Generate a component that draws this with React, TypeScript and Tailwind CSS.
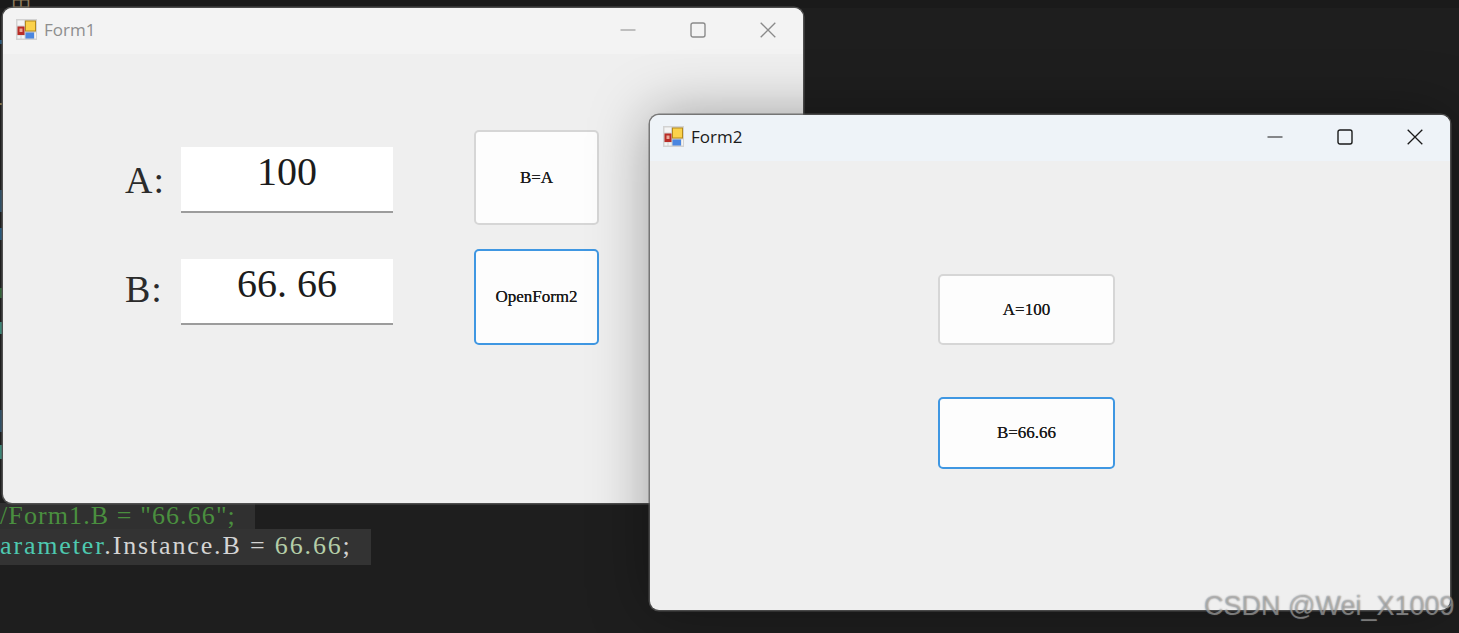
const windowIcon = (
  <svg width="21" height="21" viewBox="0 0 21 21" className="shrink-0">
    <rect x="0" y="0" width="21" height="21" fill="#d2d2d2" />
    <rect x="1.5" y="1.5" width="6.5" height="5" fill="#f4f4f4" />
    <rect x="1.5" y="16.5" width="3" height="3" fill="#f4f4f4" />
    <rect x="5.5" y="16.5" width="3" height="3" fill="#f4f4f4" />
    <rect x="1.5" y="7.5" width="7" height="8.5" fill="#b92c26" />
    <rect x="3.5" y="9.5" width="3" height="3.5" fill="#eca99a" />
    <rect x="9" y="1.5" width="11" height="11" fill="#b58a1c" />
    <rect x="10" y="2.5" width="9" height="9" fill="#fbd24b" />
    <rect x="9.5" y="13.5" width="8.5" height="6" fill="#4a86e0" />
    <rect x="18.5" y="13.5" width="1.5" height="6" fill="#f4f4f4" />
  </svg>
);

function TitleBar({ title, active }: { title: string; active: boolean }) {
  const stroke = active ? '#1a1a1a' : '#8a8a8a';
  return (
    <div className={`box-border flex h-[46px] items-center pb-[3px] ${active ? 'bg-[#eef3f8]' : 'bg-[#f3f3f3]'}`}>
      <div className="ml-[13px]">{windowIcon}</div>
      <span className={`ml-[7px] flex-1 text-[17px] font-['Open_Sans',sans-serif] ${active ? 'text-[#1a1a1a]' : 'text-[#8e8e8e]'}`}>
        {title}
      </span>
      <div className="flex w-[70px] justify-center">
        <svg width="16" height="16" viewBox="0 0 16 16" fill="none" stroke={stroke} strokeWidth="1.2">
          <path d="M0.5 8H15.5" />
        </svg>
      </div>
      <div className="flex w-[70px] justify-center">
        <svg width="16" height="16" viewBox="0 0 16 16" fill="none" stroke={stroke} strokeWidth="1.4">
          <rect x="1" y="1" width="14" height="14" rx="2" />
        </svg>
      </div>
      <div className="flex w-[70px] justify-center">
        <svg width="16" height="16" viewBox="0 0 16 16" fill="none" stroke={stroke} strokeWidth="1.3">
          <path d="M0.7 0.7L15.3 15.3M15.3 0.7L0.7 15.3" />
        </svg>
      </div>
    </div>
  );
}

function FormButton({ label, focused, className }: { label: string; focused?: boolean; className: string }) {
  return (
    <button
      className={`flex items-center justify-center rounded-[5px] bg-[#fdfdfd] font-['Liberation_Serif',serif] text-[17px] text-[#1a1a1a] ${className} ${
        focused ? 'border-2 border-[#3f97e2]' : 'border-2 border-[#d6d6d6]'
      }`}
    >
      <span className="[text-shadow:0_0_0.6px_#222]">{label}</span>
    </button>
  );
}

function ValueRow({ label, labelClass, children }: { label: string; labelClass: string; children: React.ReactNode }) {
  return (
    <div className="flex items-center font-['Liberation_Serif',serif]">
      <span className={`w-[56px] text-[38px] leading-none tracking-[1px] text-[#2b2b2b] ${labelClass}`}>{label}</span>
      <div className="flex h-[66px] w-[212px] justify-center border-b-2 border-[#9c9c9c] bg-white pt-[3px] text-[40px] leading-[44px] text-[#1c1c1c]">
        {children}
      </div>
    </div>
  );
}

function EditorLines() {
  return (
    <div className="absolute inset-x-0 top-[503px] font-['Liberation_Serif',serif] text-[26px] whitespace-nowrap">
      <div className="h-[26px] w-[255px] bg-[#303030] leading-[26px] tracking-[1.1px] text-[#4a8f3f]">
        /Form1.B = "66.66";
      </div>
      <div className="h-[36px] w-[371px] bg-[#333333] leading-[34px] tracking-[1.85px] text-[#d4d4d4]">
        <span className="text-[#4ec9b0]">arameter</span>.Instance.B = <span className="text-[#b5cea8]">66.66</span>;
      </div>
    </div>
  );
}

export default function App() {
  return (
    <div className="relative h-[633px] w-[1459px] overflow-hidden bg-[#1e1e1e]">
      <div className="h-[8px] bg-[#1a1a1a]" />

      {/* bits of the editor peeking out behind Form1 */}
      <span className="absolute left-[11px] top-[-10px] font-['Noto_Sans_CJK_SC',sans-serif] text-[20px] leading-[20px] text-[#8f7d5c]">田</span>
      <div className="absolute left-0 top-[40px] h-[4px] w-[2px] bg-[#2f7fb8]/60" />
      <div className="absolute left-0 top-[103px] h-[2px] w-[2px] bg-[#c8a860]/60" />
      <div className="absolute left-0 top-[190px] h-[22px] w-[2px] bg-[#3a6f96]/60" />
      <div className="absolute left-0 top-[228px] h-[12px] w-[2px] bg-[#2f7fb8]/60" />
      <div className="absolute left-0 top-[288px] h-[10px] w-[2px] bg-[#3f8f4a]/60" />
      <div className="absolute left-0 top-[322px] h-[12px] w-[2px] bg-[#4ec9b0]/60" />
      <div className="absolute left-0 top-[410px] h-[22px] w-[2px] bg-[#3a6f96]/60" />
      <div className="absolute left-0 top-[445px] h-[14px] w-[2px] bg-[#4ec9b0]/60" />

      <EditorLines />

      {/* Form1 */}
      <div className="absolute left-[3px] top-[8px] h-[495px] w-[800px] overflow-hidden rounded-[9px] bg-[#efefef] shadow-[0_0_0_1.5px_rgba(90,90,90,0.8)]">
        <TitleBar title="Form1" active={false} />
        <div className="flex pl-[122px]">
          <div className="flex flex-col gap-[46px] pt-[93px]">
            <ValueRow label="A:" labelClass="pb-[1px]">
              <span>100</span>
            </ValueRow>
            <ValueRow label="B:" labelClass="pb-[6px]">
              <span>
                66<span className="inline-block w-[20px]">.</span>66
              </span>
            </ValueRow>
          </div>
          <div className="ml-[81px] flex flex-col gap-[24px] pt-[76px]">
            <FormButton label="B=A" className="h-[95px] w-[125px]" />
            <FormButton label="OpenForm2" focused className="h-[96px] w-[125px]" />
          </div>
        </div>
      </div>

      {/* Form2 */}
      <div className="absolute left-[650px] top-[115px] h-[495px] w-[800px] overflow-hidden rounded-[9px] bg-[#efefef] shadow-[0_0_0_1.5px_rgba(90,90,90,0.75),0_0_60px_rgba(0,0,0,0.35)]">
        <TitleBar title="Form2" active />
        <div className="flex flex-col gap-[52px] pl-[288px] pt-[113px]">
          <FormButton label="A=100" className="h-[71px] w-[177px]" />
          <FormButton label="B=66.66" focused className="h-[72px] w-[177px]" />
        </div>
      </div>

      <span className="absolute left-[1204px] top-[590px] font-['Liberation_Sans',sans-serif] text-[27px] leading-[32px] text-white/35 [text-shadow:0_0_1.5px_rgba(70,70,70,0.8)]">
        CSDN @Wei_X1009
      </span>
    </div>
  );
}
